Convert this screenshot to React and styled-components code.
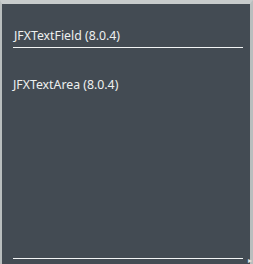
import React from "react";
import styled, { createGlobalStyle } from "styled-components";

const GlobalStyle = createGlobalStyle`
  html, body {
    margin: 0;
    padding: 0;
    background: #434b53;
  }
  body {
    font-family: "Noto Sans", "Open Sans", sans-serif;
  }
`;

const Window = styled.div`
  box-sizing: border-box;
  width: 253px;
  height: 264px;
  background: #434b53;
  border-top: 4px solid #c8cccc;
  border-left: 2px solid #b9bebe;
  border-right: 3px solid #b9bebe;
  padding: 23px 7px 0 11px;
  display: flex;
  flex-direction: column;
  position: relative;
`;

const Field = styled.div`
  display: flex;
  flex-direction: column;
`;

const Label = styled.span`
  color: #eef0f0;
  font-size: 12.3px;
  line-height: 17px;
  padding-left: ${(p) => p.$indent || 0}px;
`;

const Underline = styled.div`
  height: 1px;
  background: #f2f4f4;
  margin-top: ${(p) => p.$gap || 0}px;
  margin-bottom: ${(p) => p.$bottom || 0}px;
`;

const Area = styled.div`
  flex: 1;
  display: flex;
  flex-direction: column;
  margin-top: 28px;
`;

const AreaBody = styled.div`
  flex: 1;
`;

const Grip = styled.span`
  position: absolute;
  right: -2px;
  bottom: 0;
  color: #e0e2e2;
  font-size: 8px;
  line-height: 8px;
`;

export default function App() {
  return (
    <>
      <GlobalStyle />
      <Window>
        <Field>
          <Label $indent={1}>JFXTextField (8.0.4)</Label>
          <Underline $gap={3} />
        </Field>
        <Area>
          <Label>JFXTextArea (8.0.4)</Label>
          <AreaBody />
          <Underline $bottom={5} />
        </Area>
        <Grip>▸</Grip>
      </Window>
    </>
  );
}
